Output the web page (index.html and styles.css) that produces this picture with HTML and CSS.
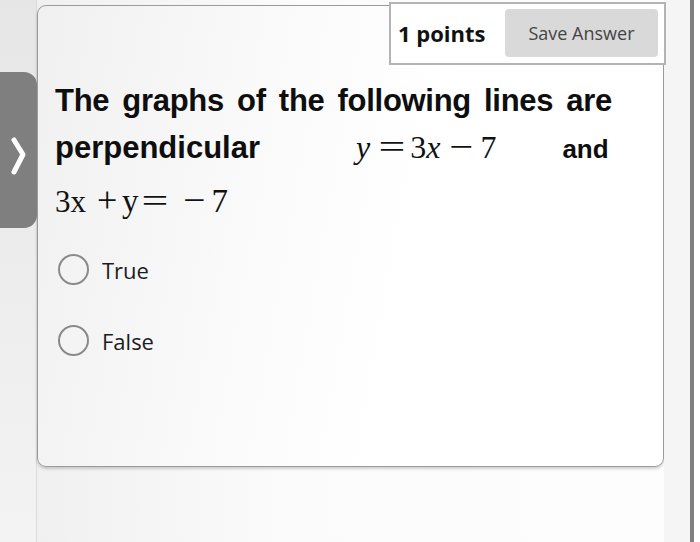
FILE: index.html
```html
<!DOCTYPE html>
<html>
<head>
<meta charset="utf-8">
<link rel="stylesheet" href="styles.css">
</head>
<body>
<div class="page">
  <div class="side"></div>
  <div class="main">
    <div class="card">
      <div class="question">
        <div class="line1">The graphs of the following lines are</div>
        <div class="line2"><span>perpendicular</span><span class="math m1"><i>y</i><span class="eq">=</span>3<i>x</i><span class="op">−</span>7</span><span class="and">and</span></div>
        <div class="line3 math">3x<span class="plus">+</span><span class="yv">y</span><span class="eq2">=</span><span class="neg">−</span><span class="seven">7</span></div>
      </div>
      <div class="options">
        <label class="opt"><span class="radio"></span><span class="lbl">True</span></label>
        <label class="opt"><span class="radio"></span><span class="lbl">False</span></label>
      </div>
    </div>
  </div>
  <div class="right"></div>
  <div class="scroll"></div>
  <div class="edge"></div>
</div>
<div class="points">
  <span class="pts">1 points</span>
  <span class="save">Save Answer</span>
</div>
<div class="tab">
  <svg width="18" height="42" viewBox="0 0 18 42"><path d="M4 4 L13 18.5 L4 36" fill="none" stroke="#fff" stroke-width="5" stroke-linecap="round" stroke-linejoin="round"/></svg>
</div>
</body>
</html>
```

FILE: styles.css
```css
html, body {
  margin: 0;
  padding: 0;
}
body {
  width: 700px;
  height: 542px;
  overflow: hidden;
  position: relative;
  background: #f2f2f2;
  font-family: "Liberation Sans", Arial, sans-serif;
}
.page {
  display: flex;
  height: 542px;
}
.side {
  width: 36px;
  background: linear-gradient(to bottom, #e6e6e6, #f3f3f3);
  border-right: 1px solid #dcdcdc;
}
.main {
  width: 627px;
  padding-top: 5px;
  background: linear-gradient(to right, #f0f0f0, #fbfbfb 40%, #fdfdfd);
}
.card {
  height: 462px;
  border: 1px solid #9b9b9b;
  border-radius: 9px;
  box-shadow: 0 2px 3px rgba(0, 0, 0, 0.18);
  background: linear-gradient(100deg, #f0f0f0 0%, #fafafa 35%, #ffffff 60%);
  padding: 0 0 0 17px;
  box-sizing: border-box;
}
.question {
  padding-top: 72px;
  width: 557px;
  color: #0e0e0e;
  font-weight: bold;
  font-size: 31px;
  line-height: 46px;
}
.line1 {
  text-align: justify;
  text-align-last: justify;
  letter-spacing: -0.3px;
}
.line2 {
  display: flex;
  align-items: baseline;
}
.math {
  font-family: "Liberation Serif", "Times New Roman", serif;
  font-weight: normal;
  font-size: 31px;
  letter-spacing: 0;
  white-space: nowrap;
  color: #111;
}
.m1 {
  margin-left: 96px;
  font-size: 32px;
}
.m1 i {
  font-style: italic;
}
.eq, .eq2, .op, .plus, .neg {
  display: inline-block;
  text-align: center;
}
.eq {
  width: 36px;
  margin-left: 4px;
  font-size: 34px;
  transform: scaleX(1.4);
}
.op {
  width: 38px;
  margin-left: 2px;
  font-size: 34px;
  transform: scaleX(1.25);
}
.and {
  margin-left: 66px;
  font-size: 26px;
}
.line3 {
  line-height: 52px;
  height: 52px;
  margin-top: 2px;
  font-size: 31px;
}
.plus {
  width: 20px;
  margin-left: 11px;
  font-size: 36px;
}
.yv {
  margin-left: 5px;
  font-size: 33px;
}
.eq2 {
  width: 28px;
  margin-left: 2px;
  font-size: 34px;
  transform: scaleX(1.4);
}
.neg {
  width: 20px;
  margin-left: 15px;
  font-size: 36px;
  transform: scaleX(1.1);
}
.seven {
  margin-left: 8px;
  font-size: 33px;
}
.options {
  margin-top: 28px;
  display: flex;
  flex-direction: column;
  gap: 40px;
  padding-left: 3px;
}
.opt {
  display: flex;
  align-items: center;
  gap: 13px;
  height: 31px;
}
.radio {
  width: 27px;
  height: 27px;
  border: 2px solid #8a8a8a;
  border-radius: 50%;
  display: block;
}
.lbl {
  font-family: "Open Sans", sans-serif;
  font-size: 22px;
  color: #1c1c1c;
}
.right {
  width: 26px;
  background: #f5f5f5;
}
.scroll {
  width: 4px;
  background: #808080;
}
.edge {
  flex: 1;
  background: #ffffff;
}
.points {
  position: absolute;
  left: 389px;
  top: 2px;
  width: 277px;
  height: 63px;
  box-sizing: border-box;
  border: 2px solid #b4b4b4;
  background: #ffffff;
  display: flex;
  align-items: center;
  padding: 0 6px 2px 7px;
}
.pts {
  font-family: "Open Sans", sans-serif;
  font-weight: bold;
  font-size: 22px;
  color: #111;
  flex: 1;
}
.save {
  width: 153px;
  height: 48px;
  background: #d9d9d9;
  border-radius: 4px;
  display: flex;
  align-items: center;
  justify-content: center;
  font-family: "Open Sans", sans-serif;
  font-size: 18px;
  color: #444;
}
.tab {
  position: absolute;
  left: -12px;
  top: 72px;
  width: 49px;
  height: 156px;
  background: #7f7f7f;
  border-radius: 13px;
  padding: 64px 0 0 22px;
  box-sizing: border-box;
}
.tab svg {
  display: block;
}
```
